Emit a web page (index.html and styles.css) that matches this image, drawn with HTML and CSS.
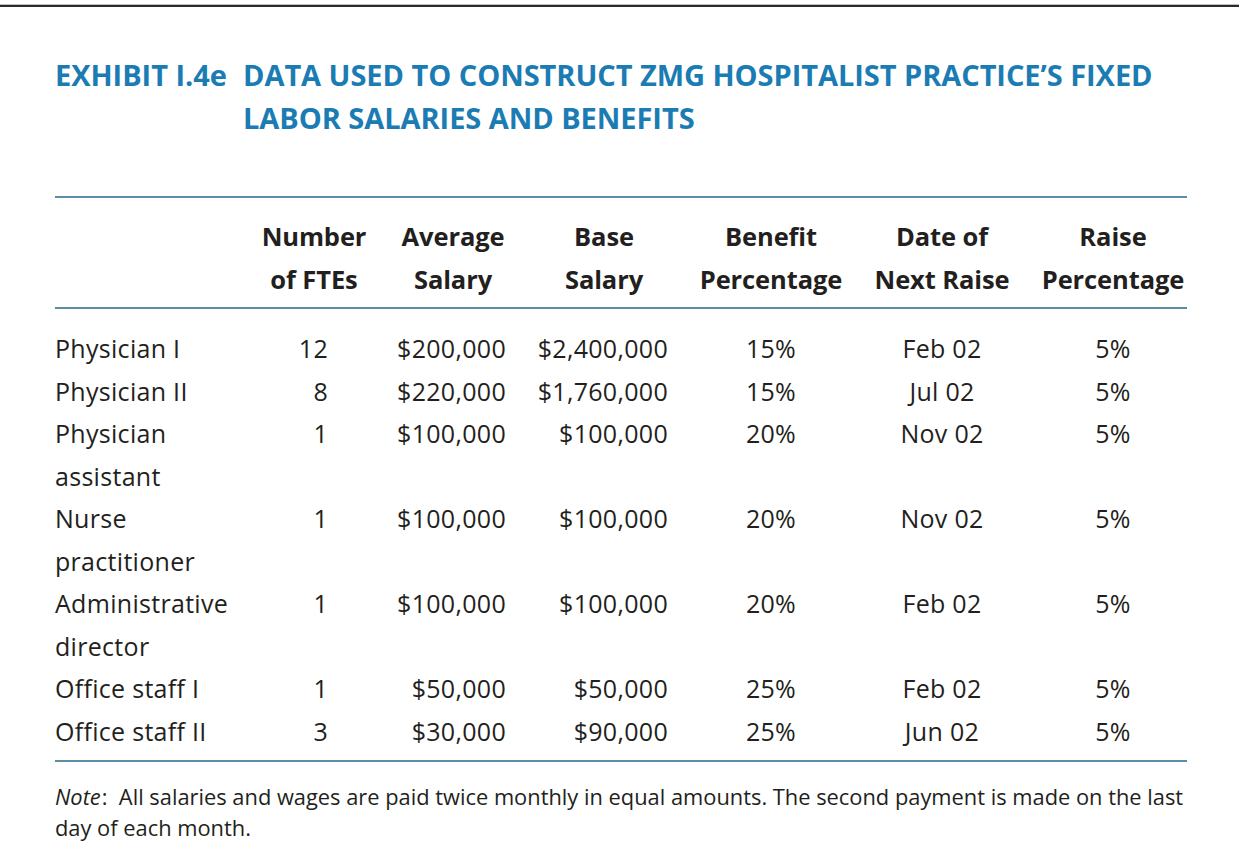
FILE: index.html
```html
<!DOCTYPE html>
<html lang="en">
<head>
<meta charset="utf-8">
<title>Exhibit I.4e</title>
<link rel="stylesheet" href="styles.css">
</head>
<body>
<div class="top-rule"></div>
<main class="exhibit">
  <h1 class="title">
    <span class="title-label">EXHIBIT I.4e</span>
    <span class="title-text">DATA USED TO CONSTRUCT ZMG HOSPITALIST PRACTICE’S FIXED<br>LABOR SALARIES AND BENEFITS</span>
  </h1>
  <table class="data">
    <colgroup>
      <col class="c-label">
      <col class="c-num">
      <col class="c-avg">
      <col class="c-base">
      <col class="c-ben">
      <col class="c-date">
      <col class="c-raise">
    </colgroup>
    <thead>
      <tr>
        <th></th>
        <th>Number<br>of FTEs</th>
        <th>Average<br>Salary</th>
        <th>Base<br>Salary</th>
        <th>Benefit<br>Percentage</th>
        <th>Date of<br>Next Raise</th>
        <th class="raise">Raise<br>Percentage</th>
      </tr>
    </thead>
    <tbody>
      <tr><td class="label">Physician I</td><td class="num">12</td><td class="avg">$200,000</td><td class="base">$2,400,000</td><td class="ctr">15%</td><td class="ctr">Feb 02</td><td class="ctr raise">5%</td></tr>
      <tr><td class="label">Physician II</td><td class="num">8</td><td class="avg">$220,000</td><td class="base">$1,760,000</td><td class="ctr">15%</td><td class="ctr">Jul 02</td><td class="ctr raise">5%</td></tr>
      <tr><td class="label">Physician assistant</td><td class="num">1</td><td class="avg">$100,000</td><td class="base">$100,000</td><td class="ctr">20%</td><td class="ctr">Nov 02</td><td class="ctr raise">5%</td></tr>
      <tr><td class="label">Nurse practitioner</td><td class="num">1</td><td class="avg">$100,000</td><td class="base">$100,000</td><td class="ctr">20%</td><td class="ctr">Nov 02</td><td class="ctr raise">5%</td></tr>
      <tr><td class="label">Administrative director</td><td class="num">1</td><td class="avg">$100,000</td><td class="base">$100,000</td><td class="ctr">20%</td><td class="ctr">Feb 02</td><td class="ctr raise">5%</td></tr>
      <tr><td class="label">Office staff I</td><td class="num">1</td><td class="avg">$50,000</td><td class="base">$50,000</td><td class="ctr">25%</td><td class="ctr">Feb 02</td><td class="ctr raise">5%</td></tr>
      <tr><td class="label">Office staff II</td><td class="num">3</td><td class="avg">$30,000</td><td class="base">$90,000</td><td class="ctr">25%</td><td class="ctr">Jun 02</td><td class="ctr raise">5%</td></tr>
    </tbody>
  </table>
  <p class="note"><em class="note-label">Note</em>:&nbsp; All salaries and wages are paid twice monthly in equal amounts. The second payment is made on the last day of each month.</p>
</main>
</body>
</html>
```
FILE: styles.css
```css
html, body {
  margin: 0;
  padding: 0;
  background: #ffffff;
}
body {
  font-family: "Open Sans", "Noto Sans", "Liberation Sans", sans-serif;
  color: #231f20;
}
.top-rule {
  margin-top: 4px;
  height: 2px;
  background: #2b2b2b;
  border-top: 1px solid #bdbdbd;
}
.exhibit {
  padding: 0 52px 0 55px;
}
.title {
  margin: 46px 0 0;
  display: flex;
  font-size: 29px;
  line-height: 43px;
  font-weight: 700;
  font-stretch: 92%;
  color: #1b7cb4;
  letter-spacing: -0.05px;
  white-space: nowrap;
}
.title-label {
  width: 188px;
  flex: none;
}
.data {
  margin-top: 57px;
  width: 1132px;
  table-layout: fixed;
  border-collapse: collapse;
  border-top: 2px solid #5b8ea6;
  border-bottom: 2px solid #5b8ea6;
}
.c-label { width: 195px; }
.c-num { width: 128px; }
.c-avg { width: 150px; }
.c-base { width: 152px; }
.c-ben { width: 182px; }
.c-date { width: 160px; }
.c-raise { width: 165px; }
thead th {
  font-size: 25.5px;
  font-weight: 700;
  line-height: 43px;
  text-align: center;
  padding: 17px 0 6px;
  border-bottom: 2px solid #5b8ea6;
  letter-spacing: -0.1px;
  white-space: nowrap;
}
td {
  font-size: 25px;
  letter-spacing: 0.3px;
  line-height: 42.5px;
  padding: 0;
  vertical-align: top;
}
tbody tr:first-child td { padding-top: 18px; }
tbody tr:last-child td { padding-bottom: 8px; }
td.label { text-align: left; }
td.num { text-align: right; padding-right: 50px; }
td.avg { text-align: right; padding-right: 22px; }
td.base { text-align: right; padding-right: 12px; }
td.ctr { text-align: center; }
.raise { padding-left: 17px; }
.note {
  margin: 19px 0 0;
  font-size: 21.85px;
  line-height: 31px;
  width: 1140px;
}
.note-label {
  padding-right: 1px;
}
```
